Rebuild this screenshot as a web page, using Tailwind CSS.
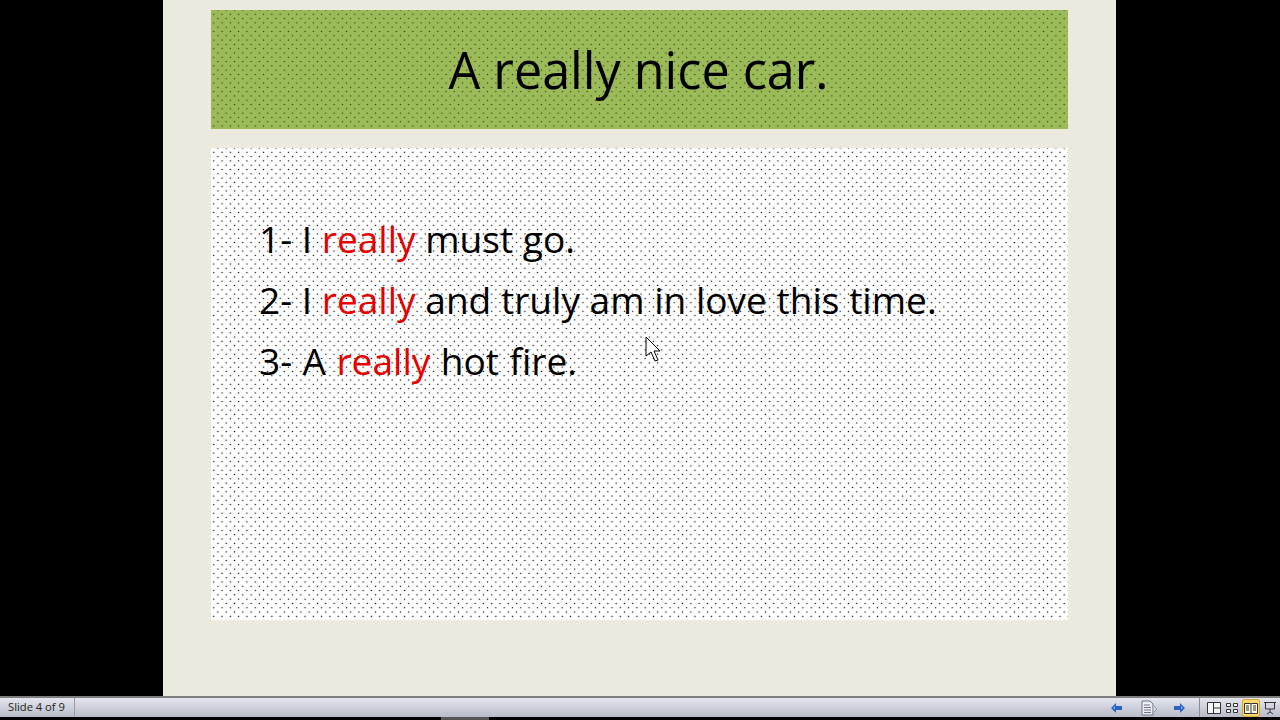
<!DOCTYPE html>
<html lang="en">
<head>
    <meta charset="UTF-8">
    <script src="https://cdn.jsdelivr.net/npm/@tailwindcss/browser@4"></script>
    <title>Slide 4 of 9</title>
</head>
<body class="w-[1280px] h-[720px] overflow-hidden bg-black font-['Open_Sans',sans-serif]">
    <!-- slide -->
    <div class="h-[696px] flex">
        <div class="relative ml-[163px] w-[953px] h-[696px] bg-[#ece9de] px-[48px] pt-[10px]">
            <div class="h-[119px] w-[857px] bg-[#9bbb59] bg-[radial-gradient(circle,#2f3a14_0.6px,transparent_1px),radial-gradient(circle,#2f3a14_0.6px,transparent_1px)] bg-[length:8.3px_8.6px] bg-[position:-1.4px_0px,2.75px_4.3px] flex items-center justify-center">
                <h1 class="text-[50.3px] leading-none text-black mt-[2px] pr-[2px]">A really nice car.</h1>
            </div>
            <div class="mt-[19px] h-[472px] w-[857px] bg-white bg-[radial-gradient(circle,#000_0.6px,transparent_1px),radial-gradient(circle,#000_0.6px,transparent_1px)] bg-[length:8.3px_8.6px] bg-[position:-1.4px_0px,2.75px_4.3px] pl-[48px] pt-[60px] text-[37.1px] leading-[61px] text-black">
                <p>1- I <span class="text-[#e60000]">really</span> must go.</p>
                <p>2- I <span class="text-[#e60000]">really</span> and truly am in love this time.</p>
                <p class="[word-spacing:0.8px]">3- A <span class="text-[#e60000]">really</span> hot fire.</p>
            </div>
            <!-- mouse pointer -->
            <svg class="absolute left-[482px] top-[336px]" width="17" height="27" viewBox="0 0 17 27">
                <path d="M1 1v19l5-4 4 9 3-1-4-9h6z" fill="#fff" stroke="#000" stroke-width="1"/>
            </svg>
        </div>
    </div>
    <!-- status bar -->
    <div class="h-[21px] border-t-2 border-[#7e7e7e] bg-gradient-to-b from-[#e3e6ee] to-[#b9bcc8] flex items-center text-[11.2px] text-[#222]">
        <div class="w-[75px] pl-[8px] border-r border-[#9a9da8] h-full flex items-center -mt-px">Slide 4 of 9</div>
        <div class="ml-auto flex items-center h-full">
            <svg width="11" height="10" viewBox="0 0 11 10" class="mr-[18px]"><path d="M0 5l5-5v3h6v4H5v3z" fill="#2a63c4"/><path d="M2 5l2-2v3z" fill="#8fb8ee"/></svg>
            <svg width="18" height="16" viewBox="0 0 18 16" class="mr-[16px]"><path d="M2 1h8l3 3v11H2z" fill="#e9ecf2" stroke="#6d7686"/><path d="M4 5h6M4 7.500h7M4 10h7M4 12.500h7" stroke="#6d7686"/><path d="M13 5l4 4-4 4z" fill="#d6d9e0" stroke="#9a9da8"/></svg>
            <svg width="11" height="10" viewBox="0 0 11 10" class="mr-[14px]"><path d="M11 5L6 0v3H0v4h6v3z" fill="#2a63c4"/><path d="M9 5L7 3v3z" fill="#8fb8ee"/></svg>
            <div class="w-px h-full bg-[#8a8d98] mr-[7px]"></div>
            <svg width="14" height="12" viewBox="0 0 14 12" class="mr-[4px]"><path d="M.5.5h13v11H.5zM6.500.5v11M6.500 6h7" fill="#f4f5f8" stroke="#333"/></svg>
            <svg width="14" height="12" viewBox="0 0 14 12" class="mr-[3px]"><path d="M1.500 1.500h4v3h-4zM8.500 1.500h4v3h-4zM1.500 7.500h4v3h-4zM8.500 7.500h4v3h-4z" fill="#f4f5f8" stroke="#333"/></svg>
            <div class="w-[18px] h-[18px] bg-[#fbd870] border border-[#d8a93a] rounded-[2px] flex items-center justify-center mr-[3px]">
                <svg width="14" height="12" viewBox="0 0 14 12"><path d="M.5 1.500h6l.5 1 .5-1h6v10h-13zM7 2.500v9M2 4h3M2 6h3M2 8h3M9 4h3M9 6h3M9 8h3" fill="#fff8e0" stroke="#333"/></svg>
            </div>
            <svg width="14" height="14" viewBox="0 0 14 14" class="mr-[3px]"><path d="M1 1.500h12M2.500 2v6h9V2M7 8v3M4 13l3-2 3 2" fill="none" stroke="#333"/></svg>
        </div>
    </div>
    <!-- strip under the bar -->
    <div class="h-[3px] flex"><div class="ml-[441px] w-[48px] bg-[#555]"></div></div>
</body>
</html>
